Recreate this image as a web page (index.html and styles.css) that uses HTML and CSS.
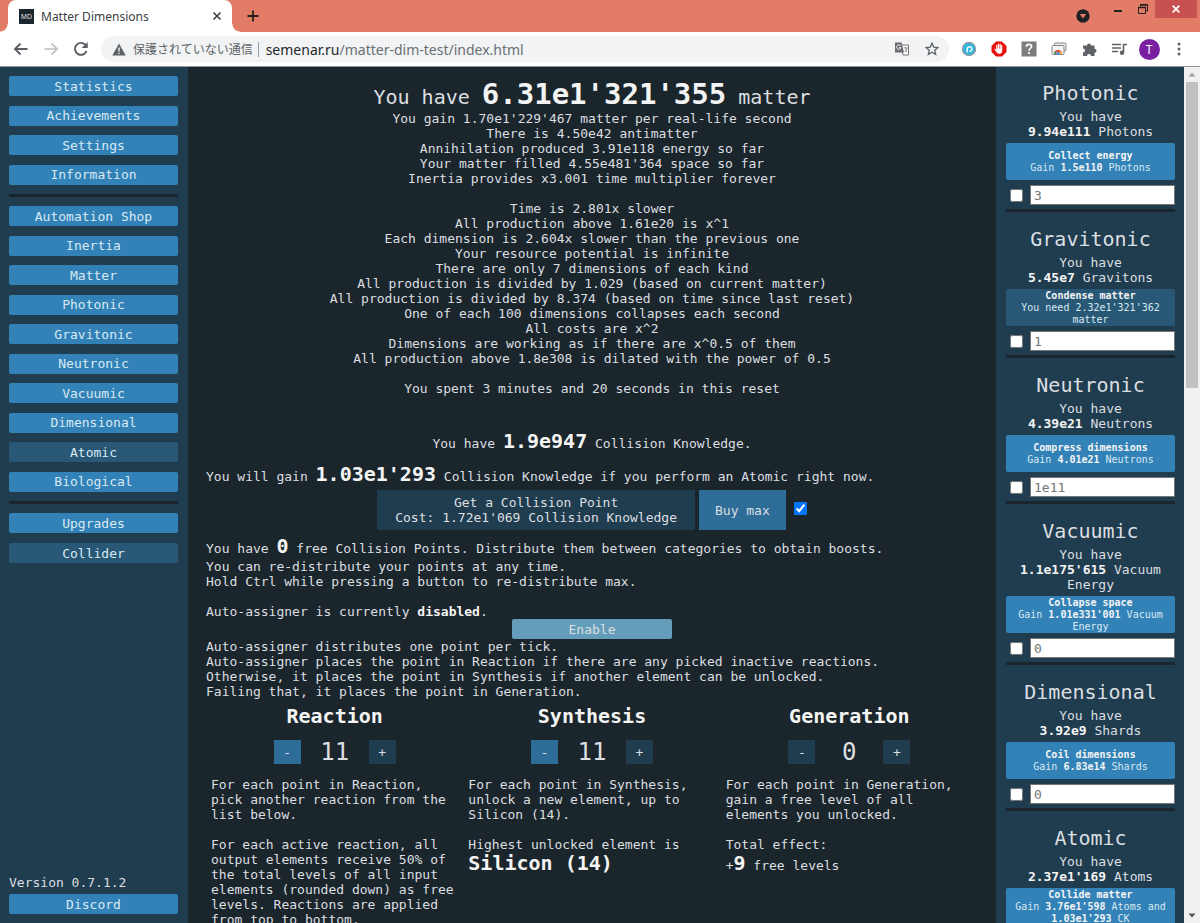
FILE: index.html
```
<!DOCTYPE html>
<html lang="en">

<head>
    <meta charset="UTF-8">
    <meta name="viewport" content="width=device-width, initial-scale=1.0">
    <title>Matter Dimensions</title>
    <link rel="stylesheet" href="styles.css">
</head>

<body>

    <!-- Browser window -->
    <header class="browser">
        <div class="tab-strip">
            <div class="tab">
                <svg class="favicon" width="15" height="15" viewBox="0 0 15 15"><rect width="15" height="15" fill="#1b262c"/><text x="7.5" y="10" text-anchor="middle">MD</text></svg>
                <span class="tab-title">Matter Dimensions</span>
                <button class="icon-button tab-close" aria-label="Close tab">
                    <svg width="10" height="10" viewBox="0 0 10 10"><path d="M1.5 1.5l7 7M8.500 1.500l-7 7" stroke="#3c4043" stroke-width="1.6"/></svg>
                </button>
            </div>
            <button class="icon-button new-tab" aria-label="New tab">
                <svg width="12" height="12" viewBox="0 0 12 12"><path d="M6 0.500v11M0.500 6h11" stroke="#26201f" stroke-width="1.8"/></svg>
            </button>
            <div class="window-controls">
                <button class="icon-button tab-search" aria-label="Search tabs">
                    <svg width="14" height="14" viewBox="0 0 14 14"><circle cx="7" cy="7" r="6.700" fill="#202124"/><path d="M3.800 5h6.400L7 9.600z" fill="#e27c66"/></svg>
                </button>
                <button class="icon-button window-button" aria-label="Minimize">
                    <svg width="10" height="10" viewBox="0 0 10 10"><path d="M1 7h8" stroke="#26201f" stroke-width="2"/></svg>
                </button>
                <button class="icon-button window-button" aria-label="Restore">
                    <svg width="10" height="10" viewBox="0 0 10 10"><path d="M2.500 2.500V1h7v6H8M.5 3.500h7v6h-7z" fill="none" stroke="#26201f"/><path d="M0 3.500h8M2 .7h8" stroke="#26201f" stroke-width="1.4"/></svg>
                </button>
                <button class="icon-button window-close" aria-label="Close">
                    <svg width="8" height="8" viewBox="0 0 8 8"><path d="M.7.7l6.600 6.600M7.300.7L.7 7.300" stroke="#fff" stroke-width="1.7"/></svg>
                </button>
            </div>
        </div>

        <div class="toolbar">
            <button class="icon-button tool" aria-label="Back">
                <svg width="16" height="16" viewBox="0 0 16 16"><path d="M14.500 8H2M7.500 2.500L2 8l5.500 5.500" fill="none" stroke="#5a5d61" stroke-width="1.900"/></svg>
            </button>
            <button class="icon-button tool" aria-label="Forward">
                <svg width="16" height="16" viewBox="0 0 16 16"><path d="M1.500 8H14M8.500 2.500L14 8l-5.500 5.500" fill="none" stroke="#babcbe" stroke-width="1.700"/></svg>
            </button>
            <button class="icon-button tool" aria-label="Reload">
                <svg width="16" height="16" viewBox="0 0 16 16"><path d="M13.600 10A6 6 0 1 1 12.400 3.800L14 5.400" fill="none" stroke="#5a5d61" stroke-width="1.900"/><path d="M14.700 1v6H8.700z" fill="#5a5d61"/></svg>
            </button>
            <div class="omnibox">
                <svg width="14" height="13" viewBox="0 0 14 13"><path d="M7 .5L13.700 12.500H.3z" fill="#5f6368"/><path d="M7 4.500v4M7 9.700v1.400" stroke="#f1f3f4" stroke-width="1.400"/></svg>
                <span class="security">保護されていない通信</span>
                <span class="url"><span class="host">semenar.ru</span>/matter-dim-test/index.html</span>
                <button class="icon-button tool" aria-label="Translate">
                    <svg width="14" height="14" viewBox="0 0 14 14"><path d="M6 3h7.500v10H8z" fill="#fff" stroke="#777"/><path d="M0 .5h6.500L9 10.500H0z" fill="#6b6d70"/><path d="M5.800 4A2.200 2.200 0 1 0 6 5.700H4" fill="none" stroke="#fff" stroke-width="1"/><path d="M8.800 6h4M10.700 4.800V6M12 6q-.5 3-2.500 4M10 7.500l2 2.500" fill="none" stroke="#777" stroke-width=".8"/></svg>
                </button>
                <button class="icon-button tool" aria-label="Bookmark">
                    <svg width="14" height="14" viewBox="0 0 14 14"><path d="M7 1.200l1.700 3.900 4.200.4-3.200 2.800 1 4.200L7 10.300l-3.700 2.200 1-4.200L1.100 5.500l4.200-.4z" fill="none" stroke="#5f6368" stroke-width="1.300"/></svg>
                </button>
            </div>
            <button class="icon-button tool" aria-label="Search extension">
                <svg width="16" height="16" viewBox="0 0 16 16"><circle cx="8" cy="8" r="6.600" fill="#35b5dc" stroke="#9199a0" stroke-width="1.200"/><path d="M6.200 11.500V8a2.300 2.300 0 1 1 2.300 2.300" fill="none" stroke="#e8faff" stroke-width="1.500"/></svg>
            </button>
            <button class="icon-button tool" aria-label="Blocker">
                <svg width="16" height="16" viewBox="0 0 16 16"><path d="M5 .5h6L15.500 5v6L11 15.500H5L.5 11V5z" fill="#e8100c"/><path d="M5.800 8V4.300M7.500 8V3M9.200 8V3.300M10.700 8V4.700M4 8.300l2.500 3" stroke="#fff" stroke-width="1.200" stroke-linecap="round"/><path d="M5.200 7.500h6v2.500a3 3 0 0 1-5.300 1.700z" fill="#fff"/></svg>
            </button>
            <button class="icon-button tool" aria-label="Unknown extension">
                <svg width="16" height="16" viewBox="0 0 16 16"><rect x=".5" y=".5" width="15" height="15" fill="#7d7d7d"/><path d="M5.300 5.800Q5.500 3.300 8 3.300T10.600 5.500C10.600 7.500 8 7.300 8 9.700M8 11v2" fill="none" stroke="#fff" stroke-width="1.700"/></svg>
            </button>
            <button class="icon-button tool" aria-label="Remote desktop">
                <svg width="16" height="14" viewBox="0 0 16 14"><path d="M3.500 4V2q0-1 1-1h9.500q1 0 1 1v6q0 1-1 1h-1" fill="#eee" stroke="#888"/><rect x="1" y="3.500" width="12" height="9" rx="1" fill="#f4f4f4" stroke="#888"/><path d="M3 12a4 4 0 0 1 8 0H9a2 2 0 0 0-4 0z" fill="#e04e38"/><path d="M3 12a4 4 0 0 1 1-2.700l1.300 1.400L5 12z" fill="#3a9b52"/><path d="M11 12a4 4 0 0 0-1-2.700l-1.300 1.400L9 12z" fill="#f3c02c"/><circle cx="7" cy="11.500" r="1.500" fill="#3f7ee0"/></svg>
            </button>
            <button class="icon-button tool" aria-label="Extensions">
                <svg width="15" height="15" viewBox="0 0 15 15"><path d="M2 3.500h3A2 2 0 0 1 9 3.500h3.500v3.300a2 2 0 0 1 0 4V14H9a2 2 0 0 0-4 0H1v-3.500a2 2 0 0 0 0-4V3.500z" fill="#5f6368"/></svg>
            </button>
            <button class="icon-button tool" aria-label="Media">
                <svg width="15" height="14" viewBox="0 0 15 14"><path d="M0 2.500h9M0 6h9M0 9.500h6M11.500 10.500V2.500H15" fill="none" stroke="#5f6368" stroke-width="1.600"/><circle cx="10" cy="10.700" r="2.200" fill="#5f6368"/></svg>
            </button>
            <button class="icon-button tool" aria-label="Profile"><span class="avatar">T</span></button>
            <button class="icon-button tool" aria-label="Menu">
                <svg width="4" height="14" viewBox="0 0 4 14"><g fill="#5f6368"><circle cx="2" cy="2" r="1.500"/><circle cx="2" cy="7" r="1.500"/><circle cx="2" cy="12" r="1.500"/></g></svg>
            </button>
        </div>
    </header>

    <div class="game">

        <!-- Left menu -->
        <nav class="menu">
            <div class="menu-group menu-info">
                <button class="menu-button">Statistics</button>
                <button class="menu-button">Achievements</button>
                <button class="menu-button">Settings</button>
                <button class="menu-button">Information</button>
            </div>
            <hr>
            <div class="menu-group menu-layers">
                <button class="menu-button">Automation Shop</button>
                <button class="menu-button">Inertia</button>
                <button class="menu-button">Matter</button>
                <button class="menu-button">Photonic</button>
                <button class="menu-button">Gravitonic</button>
                <button class="menu-button">Neutronic</button>
                <button class="menu-button">Vacuumic</button>
                <button class="menu-button">Dimensional</button>
                <button class="menu-button selected">Atomic</button>
                <button class="menu-button">Biological</button>
            </div>
            <hr>
            <div class="menu-group menu-tabs">
                <button class="menu-button">Upgrades</button>
                <button class="menu-button selected">Collider</button>
            </div>
            <div class="menu-footer">
                <span>Version 0.7.1.2</span>
                <button class="menu-button">Discord</button>
            </div>
        </nav>

        <!-- Main content -->
        <main class="content">
            <section class="summary">
                <div class="matter">You have <b>6.31e1'321'355</b> matter</div>
                <p>You gain 1.70e1'229'467 matter per real-life second<br>
                There is 4.50e42 antimatter<br>
                Annihilation produced 3.91e118 energy so far<br>
                Your matter filled 4.55e481'364 space so far<br>
                Inertia provides x3.001 time multiplier forever</p>
                <p>Time is 2.801x slower<br>
                All production above 1.61e20 is x^1<br>
                Each dimension is 2.604x slower than the previous one<br>
                Your resource potential is infinite<br>
                There are only 7 dimensions of each kind<br>
                All production is divided by 1.029 (based on current matter)<br>
                All production is divided by 8.374 (based on time since last reset)<br>
                One of each 100 dimensions collapses each second<br>
                All costs are x^2<br>
                Dimensions are working as if there are x^0.5 of them<br>
                All production above 1.8e308 is dilated with the power of 0.5</p>
                <p>You spent 3 minutes and 20 seconds in this reset</p>
            </section>

            <section class="collider">
                <div class="knowledge">You have <b class="big">1.9e947</b> Collision Knowledge.</div>
                <div class="gain">You will gain <b class="big">1.03e1'293</b> Collision Knowledge if you perform an Atomic right now.</div>
                <div class="purchase">
                    <button class="buy locked">Get a Collision Point<br>Cost: 1.72e1'069 Collision Knowledge</button>
                    <button class="buy">Buy max</button>
                    <input type="checkbox" aria-label="Auto buy Collision Points" checked>
                </div>
                <div class="free-points">You have <b class="big">0</b> free Collision Points. Distribute them between categories to obtain boosts.</div>
                <p>You can re-distribute your points at any time.<br>
                Hold Ctrl while pressing a button to re-distribute max.</p>
                <p>Auto-assigner is currently <b>disabled</b>.</p>
                <button class="enable">Enable</button>
                <p>Auto-assigner distributes one point per tick.<br>
                Auto-assigner places the point in Reaction if there are any picked inactive reactions.<br>
                Otherwise, it places the point in Synthesis if another element can be unlocked.<br>
                Failing that, it places the point in Generation.</p>
            </section>

            <section class="categories">
                <div class="category">
                    <h2>Reaction</h2>
                    <div class="points">
                        <button class="step">-</button>
                        <span>11</span>
                        <button class="step locked">+</button>
                    </div>
                    <p>For each point in Reaction, pick another reaction from the list below.</p>
                    <p>For each active reaction, all output elements receive 50% of the total levels of all input elements (rounded down) as free levels. Reactions are applied from top to bottom.</p>
                </div>
                <div class="category">
                    <h2>Synthesis</h2>
                    <div class="points">
                        <button class="step">-</button>
                        <span>11</span>
                        <button class="step locked">+</button>
                    </div>
                    <p>For each point in Synthesis, unlock a new element, up to Silicon (14).</p>
                    <div>Highest unlocked element is</div>
                    <div class="result"><b class="big">Silicon (14)</b></div>
                </div>
                <div class="category">
                    <h2>Generation</h2>
                    <div class="points">
                        <button class="step locked">-</button>
                        <span>0</span>
                        <button class="step locked">+</button>
                    </div>
                    <p>For each point in Generation, gain a free level of all elements you unlocked.</p>
                    <div>Total effect:</div>
                    <div class="result">+<b class="big">9</b> free levels</div>
                </div>
            </section>
        </main>

        <!-- Right panel -->
        <aside class="resources">
            <section class="resource">
                <h3>Photonic</h3>
                <p>You have<br><b>9.94e111</b> Photons</p>
                <button class="prestige"><b>Collect energy</b><br>Gain <b>1.5e110</b> Photons</button>
                <div class="auto">
                    <input type="checkbox" aria-label="Automate Photonic">
                    <input type="text" aria-label="Photonic limit" placeholder="3">
                </div>
            </section>
            <section class="resource">
                <h3>Gravitonic</h3>
                <p>You have<br><b>5.45e7</b> Gravitons</p>
                <button class="prestige locked"><b>Condense matter</b><br>You need 2.32e1'321'362 matter</button>
                <div class="auto">
                    <input type="checkbox" aria-label="Automate Gravitonic">
                    <input type="text" aria-label="Gravitonic limit" placeholder="1">
                </div>
            </section>
            <section class="resource">
                <h3>Neutronic</h3>
                <p>You have<br><b>4.39e21</b> Neutrons</p>
                <button class="prestige"><b>Compress dimensions</b><br>Gain <b>4.01e21</b> Neutrons</button>
                <div class="auto">
                    <input type="checkbox" aria-label="Automate Neutronic">
                    <input type="text" aria-label="Neutronic limit" placeholder="1e11">
                </div>
            </section>
            <section class="resource">
                <h3>Vacuumic</h3>
                <p>You have<br><b>1.1e175'615</b> Vacuum Energy</p>
                <button class="prestige"><b>Collapse space</b><br>Gain <b>1.01e331'001</b> Vacuum Energy</button>
                <div class="auto">
                    <input type="checkbox" aria-label="Automate Vacuumic">
                    <input type="text" aria-label="Vacuumic limit" placeholder="0">
                </div>
            </section>
            <section class="resource">
                <h3>Dimensional</h3>
                <p>You have<br><b>3.92e9</b> Shards</p>
                <button class="prestige"><b>Coil dimensions</b><br>Gain <b>6.83e14</b> Shards</button>
                <div class="auto">
                    <input type="checkbox" aria-label="Automate Dimensional">
                    <input type="text" aria-label="Dimensional limit" placeholder="0">
                </div>
            </section>
            <section class="resource">
                <h3>Atomic</h3>
                <p>You have<br><b>2.37e1'169</b> Atoms</p>
                <button class="prestige"><b>Collide matter</b><br>Gain <b>3.76e1'598</b> Atoms and <b>1.03e1'293</b> CK</button>
            </section>
        </aside>

        <div class="scrollbar">
            <svg width="16" height="15" viewBox="0 0 16 15"><path d="M4.500 9.500h7L8 5.500z" fill="#a3a3a3"/></svg>
            <div class="track"><div class="thumb"></div></div>
            <svg width="16" height="15" viewBox="0 0 16 15"><path d="M4.500 5.500h7L8 9.500z" fill="#505050"/></svg>
        </div>
    </div>

</body>
</html>
```
FILE: styles.css
```
* {
    box-sizing: border-box;
}

body {
    margin: 0;
    height: 100vh;
    display: flex;
    flex-direction: column;
    overflow: hidden;
    background: #1b262c;
    color: #dcdfe1;
    font-family: "DejaVu Sans Mono", "Liberation Mono", monospace;
    font-size: 13px;
    line-height: 15px;
}

button,
input {
    font-family: inherit;
    font-size: 13px;
    line-height: 15px;
}

button {
    border: none;
    color: #dcdfe1;
    cursor: pointer;
}

input[type="checkbox"] {
    width: 13px;
    height: 13px;
    margin: 0;
}

p {
    margin: 0;
}

b {
    color: #f4f4f4;
}

/* large numbers sit on the text line without making it taller */
.big {
    font-size: 20px;
    line-height: 0;
}

/* Browser window */
.browser {
    flex: none;
    background: #fff;
    border-bottom: 1px solid #8c9a9c;
    color: #3c4043;
    font-family: "Noto Sans", "Noto Sans CJK JP", sans-serif;
}

.icon-button {
    display: flex;
    align-items: center;
    justify-content: center;
    padding: 0;
    background: none;
}

.tab-strip {
    display: flex;
    height: 32px;
    padding-left: 8px;
    background: #e27c66;
}

.tab {
    position: relative;
    display: flex;
    align-items: center;
    gap: 7px;
    width: 224px;
    padding: 0 10px 0 11px;
    border-radius: 8px 8px 0 0;
    background: #fff;
}

/* curved feet of the active tab */
.tab::before,
.tab::after {
    content: "";
    position: absolute;
    bottom: 0;
    width: 8px;
    height: 8px;
}

.tab::before {
    left: -8px;
    background: radial-gradient(circle at 0 0, #e27c66 7px, #fff 8px);
}

.tab::after {
    right: -8px;
    background: radial-gradient(circle at 100% 0, #e27c66 7px, #fff 8px);
}

.favicon text {
    fill: #e3e6e8;
    font-family: "Liberation Sans", sans-serif;
    font-size: 7px;
}

.tab-title {
    flex: 1;
    font-size: 12px;
}

.new-tab {
    width: 42px;
}

.window-controls {
    display: flex;
    height: 18px;
    margin-left: auto;
    padding-right: 3px;
}

.tab-search {
    height: 32px;
    margin-right: 15px;
}

.window-button {
    width: 25px;
}

.window-close {
    width: 42px;
    background: #c75050;
}

.toolbar {
    display: flex;
    align-items: center;
    height: 34px;
    padding: 0 6px;
}

.tool {
    width: 30px;
    height: 26px;
}

.omnibox {
    flex: 1;
    display: flex;
    align-items: center;
    gap: 7px;
    height: 26px;
    margin: 0 5px;
    padding: 0 2px 0 11px;
    border-radius: 13px;
    background: #f1f3f4;
}

.omnibox .tool + .tool {
    margin-left: -7px;
}

.security {
    padding-right: 5px;
    border-right: 1px solid #9aa0a6;
    color: #5f6368;
    font-size: 12px;
}

.url {
    flex: 1;
    color: #6b6f73;
    font-size: 14px;
}

.host {
    color: #26282b;
}

.avatar {
    width: 21px;
    height: 21px;
    border-radius: 50%;
    background: #7b1fa2;
    color: #fff;
    font-size: 12px;
    line-height: 21px;
}

/* Game layout */
.game {
    flex: 1;
    min-height: 0;
    display: grid;
    grid-template-columns: 188px minmax(0, 1fr) 188px 16px;
}

.menu,
.resources {
    background: #203d4f;
}

hr {
    width: 100%;
    height: 3px;
    margin: 9px 0;
    border: none;
    background: #1b262c;
}

.menu {
    display: flex;
    flex-direction: column;
    padding: 9px 10px 9px 9px;
}

.menu-group {
    display: flex;
    flex-direction: column;
    justify-content: space-between;
}

.menu-info {
    min-height: 109px;
}

.menu-layers {
    min-height: 286px;
}

.menu-tabs {
    min-height: 50px;
}

.menu-button {
    height: 20px;
    padding: 0;
    border-radius: 2px;
    background: #3282b8;
    color: #d9e9f2;
}

.menu-button.selected {
    background: #285876;
}

.menu-footer {
    display: flex;
    flex-direction: column;
    gap: 4px;
    margin-top: auto;
}

/* Main content */
.content {
    padding: 17px 18px 0;
    overflow: hidden;
}

.summary {
    text-align: center;
}

.summary p {
    margin-bottom: 15px;
}

.matter {
    font-size: 20px;
    line-height: 27px;
}

.matter b {
    font-size: 29px;
    line-height: 0;
}

.collider {
    display: flex;
    flex-direction: column;
    margin-top: 38px;
}

.knowledge,
.gain,
.free-points {
    line-height: 20px;
}

.knowledge {
    margin-bottom: 13px;
    text-align: center;
}

.purchase {
    display: flex;
    align-items: center;
    justify-content: center;
    gap: 4px;
    margin: 3px 0 9px;
}

.buy {
    height: 40px;
    padding: 0 16px;
    background: #2e6d98;
}

.buy.locked {
    padding: 0 18px;
}

.buy.locked,
.step.locked {
    background: #203d4f;
}

.purchase input {
    margin: 0 0 4px 4px;
}

.collider p + p {
    margin-top: 15px;
}

.enable {
    align-self: center;
    width: 160px;
    height: 20px;
    padding: 0;
    border-radius: 2px;
    background: #649dba;
}

.categories {
    display: grid;
    grid-template-columns: repeat(3, 1fr);
}

.category {
    padding: 0 5px;
}

.category h2 {
    margin: 5px 0 12px;
    color: #f4f4f4;
    font-size: 20px;
    line-height: 24px;
    text-align: center;
}

.points {
    display: flex;
    justify-content: center;
    margin-bottom: 13px;
}

.points span {
    width: 68px;
    font-size: 24px;
    line-height: 24px;
    text-align: center;
}

.step {
    width: 27px;
    height: 24px;
    padding: 0;
    background: #2e6d98;
}

.category p {
    margin-bottom: 15px;
}

.result {
    line-height: 28px;
}

/* Right panel */
.resources {
    padding: 9px 9px 0 10px;
    overflow: hidden;
    text-align: center;
}

.resource + .resource {
    margin-top: 4px;
    padding-top: 13px;
    border-top: 3px solid #1b262c;
}

.resource h3 {
    margin: 0 0 2px;
    font-size: 20px;
    font-weight: normal;
    line-height: 28px;
}

.resource:first-child {
    padding-top: 3px;
}

.prestige {
    display: block;
    width: 100%;
    height: 37px;
    margin: 4px 0 5px;
    padding: 0;
    border-radius: 2px;
    background: #3282b8;
    color: #d9e9f2;
    font-size: 10px;
    line-height: 12px;
}

.prestige.locked {
    background: #285876;
}

.auto {
    display: flex;
    align-items: center;
    gap: 7px;
    padding-left: 4px;
}

.auto input[type="text"] {
    flex: 1;
    min-width: 0;
    height: 20px;
    padding: 0 3px;
    border: 1px solid #767676;
    background: #fff;
}

/* Page scrollbar */
.scrollbar {
    display: flex;
    flex-direction: column;
    background: #f1f1f1;
}

.track {
    flex: 1;
    padding: 0 2px;
}

.thumb {
    height: 37%;
    background: #c1c1c1;
}
```
